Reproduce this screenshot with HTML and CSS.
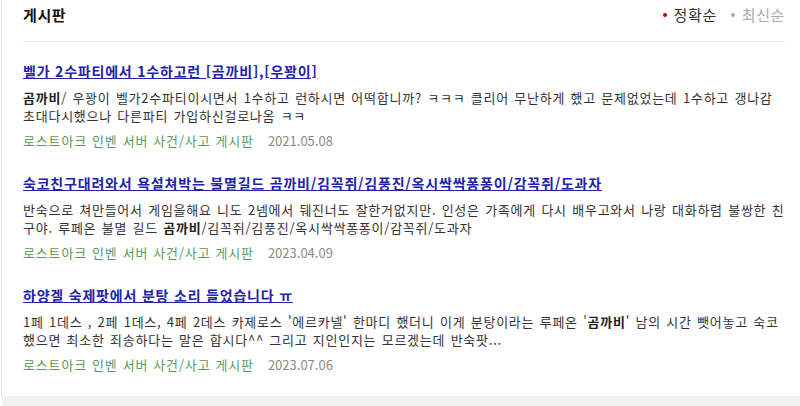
FILE: index.html
```
<!DOCTYPE html>
<html lang="ko">
<head>
<meta charset="utf-8">
<title>게시판</title>
<link rel="stylesheet" href="styles.css">
</head>
<body>
<div class="panel">
  <div class="header">
    <h2 class="heading">게시판</h2>
    <ul class="sort">
      <li class="sort-item active"><span class="dot"></span>정확순</li>
      <li class="sort-item"><span class="dot"></span>최신순</li>
    </ul>
  </div>
  <ul class="posts">
    <li class="post">
      <a class="post-title" href="#">벨가 2수파티에서 1수하고런 [곰까비],[우꽝이]</a>
      <p class="post-body"><b>곰까비</b>/ 우꽝이 벨가2수파티이시면서 1수하고 런하시면 어떡합니까? ㅋㅋㅋ 클리어 무난하게 했고 문제없었는데 1수하고 갱나감 초대다시했으나 다른파티 가입하신걸로나옴 ㅋㅋ</p>
      <div class="meta"><span class="board">로스트아크 인벤 서버 사건/사고 게시판</span><span class="date">2021.05.08</span></div>
    </li>
    <li class="post">
      <a class="post-title" href="#">숙코친구대려와서 욕설쳐박는 불멸길드 곰까비/김꼭쥐/김풍진/옥시싹싹퐁퐁이/감꼭쥐/도과자</a>
      <p class="post-body">반숙으로 쳐만들어서 게임을해요 니도 2넴에서 뒈진너도 잘한거없지만. 인성은 가족에게 다시 배우고와서 나랑 대화하렴 불쌍한 친구야. 루페온 불멸 길드 <b>곰까비</b>/김꼭쥐/김풍진/옥시싹싹퐁퐁이/감꼭쥐/도과자</p>
      <div class="meta"><span class="board">로스트아크 인벤 서버 사건/사고 게시판</span><span class="date">2023.04.09</span></div>
    </li>
    <li class="post">
      <a class="post-title" href="#">하양겔 숙제팟에서 분탕 소리 들었습니다 ㅠ</a>
      <p class="post-body">1페 1데스 , 2페 1데스, 4페 2데스 카제로스 '에르카넬' 한마디 했더니 이게 분탕이라는 루페온 '<b>곰까비</b>' 남의 시간 뺏어놓고 숙코 했으면 최소한 죄송하다는 말은 합시다^^ 그리고 지인인지는 모르겠는데 반숙팟...</p>
      <div class="meta"><span class="board">로스트아크 인벤 서버 사건/사고 게시판</span><span class="date">2023.07.06</span></div>
    </li>
  </ul>
</div>
<div class="footer"></div>
</body>
</html>
```
FILE: styles.css
```
html, body {
  margin: 0;
  padding: 0;
  background: #ffffff;
}
body {
  font-family: "Noto Sans CJK KR", "Noto Sans", sans-serif;
  color: #333333;
  width: 800px;
  height: 406px;
  overflow: hidden;
}
.panel {
  margin-left: 1px;
  border-left: 1px solid #e2e2e2;
  height: 396px;
  box-sizing: border-box;
  padding: 0 15px 0 21px;
  background: #ffffff;
}
.footer {
  height: 10px;
  background: #f1f1f1;
  margin-left: 2px;
}
.header {
  display: flex;
  justify-content: space-between;
  align-items: center;
  height: 42px;
  padding-bottom: 12px;
  box-sizing: border-box;
  border-bottom: 1px solid #e8e8e8;
}
.heading {
  margin: 0;
  font-size: 15px;
  font-weight: 700;
  color: #111111;
  line-height: 22px;
  letter-spacing: 0.6px;
}
.sort {
  display: flex;
  gap: 14px;
  list-style: none;
  margin: 0;
  padding: 0;
}
.sort-item {
  display: flex;
  align-items: center;
  gap: 7px;
  font-size: 15px;
  line-height: 20px;
  letter-spacing: 0.6px;
  color: #aaaaaa;
}
.sort-item.active {
  color: #333333;
}
.dot {
  width: 4px;
  height: 4px;
  border-radius: 50%;
  background: #aaaaaa;
}
.active .dot {
  background: #c00000;
}
.posts {
  list-style: none;
  margin: 0;
  padding: 19px 0 0;
}
.post {
  display: flex;
  flex-direction: column;
  margin-bottom: 23px;
}
.post-title {
  align-self: flex-start;
  font-size: 14px;
  font-weight: 700;
  line-height: 20px;
  letter-spacing: 0.8px;
  color: #2323a8;
  text-decoration: underline;
}
.post-body {
  margin: 8px 0 0;
  font-size: 13px;
  line-height: 18px;
  letter-spacing: 0.75px;
  word-spacing: 1px;
  color: #333333;
  word-break: break-all;
}
.post-body b {
  color: #222222;
}
.meta {
  margin-top: 7px;
  display: flex;
  gap: 14px;
  font-size: 13px;
  line-height: 18px;
}
.board {
  color: #5b9a5b;
  letter-spacing: 0.85px;
  word-spacing: 0.5px;
}
.date {
  color: #8a8a8a;
}
```
